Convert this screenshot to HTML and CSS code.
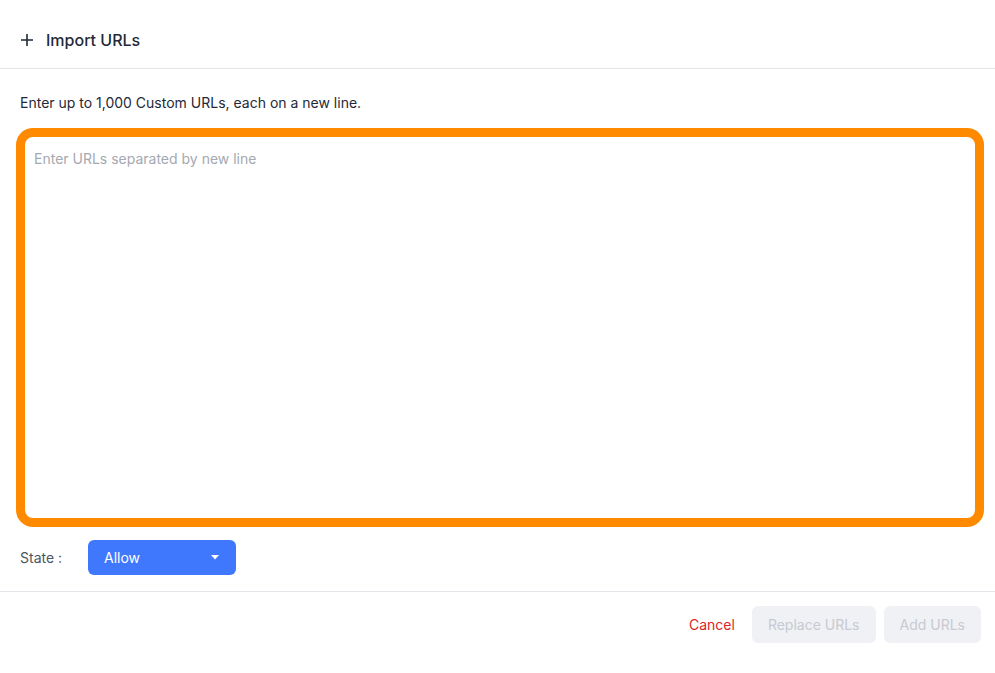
FILE: index.html
```html
<!DOCTYPE html>
<html lang="en">
<head>
<meta charset="UTF-8" />
<title>Import URLs</title>
<link rel="stylesheet" href="styles.css">
</head>
<body>
<div class="modal">
  <div class="modal-head">
    <svg class="plus" width="14" height="14" viewBox="0 0 14 14"><path d="M7 1v12M1 7h12" stroke="#1f2937" stroke-width="1.6" fill="none"/></svg>
    <span>Import URLs</span>
  </div>
  <div class="modal-body">
    <p class="hint">Enter up to 1,000 Custom URLs, each on a new line.</p>
    <div class="area-wrap">
      <textarea placeholder="Enter URLs separated by new line"></textarea>
      <div class="highlight"></div>
    </div>
    <div class="state-row">
      <label>State :</label>
      <div class="select">
        <span>Allow</span>
        <svg width="8" height="5" viewBox="0 0 8 5"><path d="M0 0h8L4 4.5z" fill="#fff"/></svg>
      </div>
    </div>
  </div>
  <div class="modal-foot">
    <button class="cancel">Cancel</button>
    <button class="btn" disabled>Replace URLs</button>
    <button class="btn" disabled>Add URLs</button>
  </div>
</div>
</body>
</html>
```
FILE: styles.css
```css
body {
  margin: 0;
  background: #fff;
  font-family: Inter, "Noto Sans", sans-serif;
  color: #1f2937;
}
.modal-head {
  box-sizing: border-box;
  height: 69px;
  border-bottom: 1px solid #e3e5ea;
  display: flex;
  align-items: center;
  gap: 12px;
  padding: 12px 20px 0;
  font-size: 16px;
  font-weight: 500;
}
.plus { display: block; }
.modal-body {
  padding: 24px 15px 16px 20px;
}
.hint {
  margin: 0;
  font-size: 14px;
  line-height: 20px;
  color: #1f2937;
}
.area-wrap {
  position: relative;
  margin-top: 17px;
}
textarea {
  display: block;
  box-sizing: border-box;
  width: 100%;
  height: 393px;
  resize: none;
  border: 1px solid #d4d7dd;
  border-radius: 6px;
  padding: 18px 13px;
  font-family: Inter, "Noto Sans", sans-serif;
  font-size: 14px;
  line-height: 20px;
}
textarea::placeholder { color: #a5a9b1; }
.highlight {
  position: absolute;
  top: -2px;
  left: -4px;
  right: -4px;
  bottom: -4px;
  border: 9px solid #ff8a00;
  border-radius: 17px;
  pointer-events: none;
}
.state-row {
  display: flex;
  align-items: center;
  margin-top: 17px;
}
.state-row label {
  width: 68px;
  font-size: 14px;
  color: #4b5563;
}
.select {
  box-sizing: border-box;
  width: 148px;
  height: 35px;
  background: #3f78fd;
  border-radius: 6px;
  color: #fff;
  display: flex;
  align-items: center;
  justify-content: space-between;
  padding: 0 17px 0 16px;
  font-size: 14px;
}
.modal-foot {
  border-top: 1px solid #e3e5ea;
  display: flex;
  justify-content: flex-end;
  align-items: center;
  gap: 8px;
  padding: 14px 14px 0 20px;
}
button {
  font-family: inherit;
  font-size: 14px;
  height: 37px;
  border: none;
  border-radius: 6px;
  padding: 0 16px;
  background: none;
}
.cancel { color: #dc2626; padding: 0 9px 0 0; }
.btn {
  background: #f0f1f5;
  color: #c7cad1;
}
```
